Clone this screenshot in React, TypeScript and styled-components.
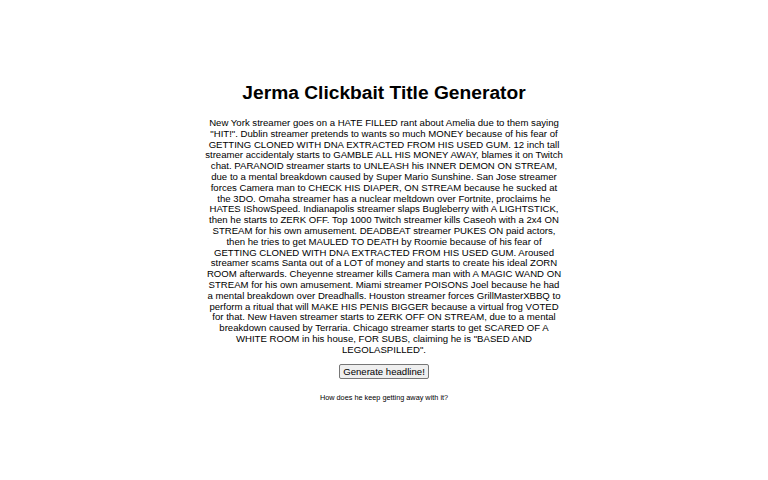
import styled, { createGlobalStyle } from 'styled-components';

const GlobalStyle = createGlobalStyle`
  body {
    margin: 0;
    background: #ffffff;
    font-family: 'Liberation Sans', Arial, sans-serif;
    color: #000000;
  }
`;

const headline =
  'New York streamer goes on a HATE FILLED rant about Amelia due to them saying "HIT!". Dublin streamer pretends to wants so much MONEY because of his fear of GETTING CLONED WITH DNA EXTRACTED FROM HIS USED GUM. 12 inch tall streamer accidentaly starts to GAMBLE ALL HIS MONEY AWAY, blames it on Twitch chat. PARANOID streamer starts to UNLEASH his INNER DEMON ON STREAM, due to a mental breakdown caused by Super Mario Sunshine. San Jose streamer forces Camera man to CHECK HIS DIAPER, ON STREAM because he sucked at the 3DO. Omaha streamer has a nuclear meltdown over Fortnite, proclaims he HATES IShowSpeed. Indianapolis streamer slaps Bugleberry with A LIGHTSTICK, then he starts to ZERK OFF. Top 1000 Twitch streamer kills Caseoh with a 2x4 ON STREAM for his own amusement. DEADBEAT streamer PUKES ON paid actors, then he tries to get MAULED TO DEATH by Roomie because of his fear of GETTING CLONED WITH DNA EXTRACTED FROM HIS USED GUM. Aroused streamer scams Santa out of a LOT of money and starts to create his ideal ZORN ROOM afterwards. Cheyenne streamer kills Camera man with A MAGIC WAND ON STREAM for his own amusement. Miami streamer POISONS Joel because he had a mental breakdown over Dreadhalls. Houston streamer forces GrillMasterXBBQ to perform a ritual that will MAKE HIS PENIS BIGGER because a virtual frog VOTED for that. New Haven streamer starts to ZERK OFF ON STREAM, due to a mental breakdown caused by Terraria. Chicago streamer starts to get SCARED OF A WHITE ROOM in his house, FOR SUBS, claiming he is "BASED AND LEGOLASPILLED".';

export default function App() {
  return (
    <>
      <GlobalStyle />
      <Page>
        <Title>Jerma Clickbait Title Generator</Title>
        <Headline>{headline}</Headline>
        <GenerateButton type="button">Generate headline!</GenerateButton>
        <Tagline>How does he keep getting away with it?</Tagline>
      </Page>
    </>
  );
}

const Page = styled.main`
  display: flex;
  flex-direction: column;
  align-items: center;
  padding-top: 82px;
`;

const Title = styled.h1`
  margin: 0 0 14px;
  font-size: 19.2px;
  font-weight: 700;
`;

const Headline = styled.p`
  margin: 0;
  width: 358px;
  text-align: center;
  font-size: 9.6px;
  line-height: 10.8px;
`;

const GenerateButton = styled.button`
  margin-top: 8px;
  padding: 1px 3px;
  font-family: 'Liberation Sans', Arial, sans-serif;
  font-size: 9.6px;
  color: #000000;
  background: #efefef;
  border: 1px solid #767676;
  border-radius: 2px;
`;

const Tagline = styled.p`
  margin: 14px 0 0;
  font-size: 7.3px;
`;
